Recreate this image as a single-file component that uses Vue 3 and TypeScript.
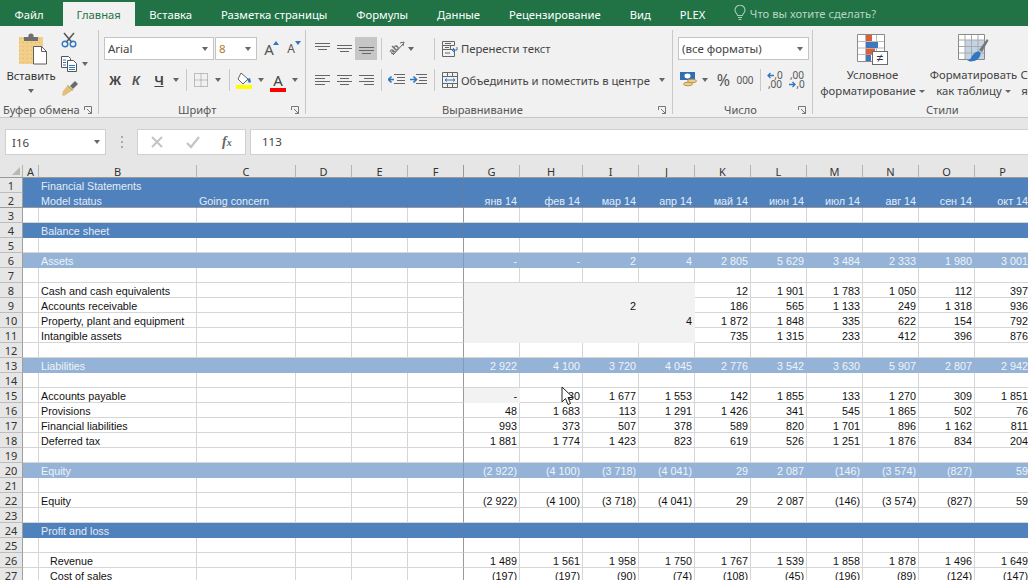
<script setup lang="ts">
interface SheetRow {
  n: number;
  kind?: "dark" | "light";
  label?: string;
  indent?: boolean;
  note?: string;
  vals?: string[];
  shade?: number[];
}

const tabs = ["Файл", "Главная", "Вставка", "Разметка страницы", "Формулы", "Данные", "Рецензирование", "Вид", "PLEX"];
const letters = ["A", "B", "C", "D", "E", "F", "G", "H", "I", "J", "K", "L", "M", "N", "O", "P"];
const equity = ["(2 922)", "(4 100)", "(3 718)", "(4 041)", "29", "2 087", "(146)", "(3 574)", "(827)", "59"];

const filled: SheetRow[] = [
  { n: 1, kind: "dark", label: "Financial Statements" },
  { n: 2, kind: "dark", label: "Model status", note: "Going concern", vals: ["янв 14", "фев 14", "мар 14", "апр 14", "май 14", "июн 14", "июл 14", "авг 14", "сен 14", "окт 14"] },
  { n: 4, kind: "dark", label: "Balance sheet" },
  { n: 6, kind: "light", label: "Assets", vals: ["-", "-", "2", "4", "2 805", "5 629", "3 484", "2 333", "1 980", "3 001"] },
  { n: 8, label: "Cash and cash equivalents", vals: ["", "", "", "", "12", "1 901", "1 783", "1 050", "112", "397"], shade: [0, 1, 2, 3] },
  { n: 9, label: "Accounts receivable", vals: ["", "", "2", "", "186", "565", "1 133", "249", "1 318", "936"], shade: [0, 1, 2, 3] },
  { n: 10, label: "Property, plant and equipment", vals: ["", "", "", "4", "1 872", "1 848", "335", "622", "154", "792"], shade: [0, 1, 2, 3] },
  { n: 11, label: "Intangible assets", vals: ["", "", "", "", "735", "1 315", "233", "412", "396", "876"], shade: [0, 1, 2, 3] },
  { n: 13, kind: "light", label: "Liabilities", vals: ["2 922", "4 100", "3 720", "4 045", "2 776", "3 542", "3 630", "5 907", "2 807", "2 942"] },
  { n: 15, label: "Accounts payable", vals: ["-", "730", "1 677", "1 553", "142", "1 855", "133", "1 270", "309", "1 851"], shade: [0] },
  { n: 16, label: "Provisions", vals: ["48", "1 683", "113", "1 291", "1 426", "341", "545", "1 865", "502", "76"] },
  { n: 17, label: "Financial liabilities", vals: ["993", "373", "507", "378", "589", "820", "1 701", "896", "1 162", "811"] },
  { n: 18, label: "Deferred tax", vals: ["1 881", "1 774", "1 423", "823", "619", "526", "1 251", "1 876", "834", "204"] },
  { n: 20, kind: "light", label: "Equity", vals: equity },
  { n: 22, label: "Equity", vals: equity },
  { n: 24, kind: "dark", label: "Profit and loss" },
  { n: 26, label: "Revenue", indent: true, vals: ["1 489", "1 561", "1 958", "1 750", "1 767", "1 539", "1 858", "1 878", "1 496", "1 649"] },
  { n: 27, label: "Cost of sales", indent: true, vals: ["(197)", "(197)", "(90)", "(74)", "(108)", "(45)", "(196)", "(89)", "(124)", "(147)"] },
];

// empty rows are just the row number
const rows: SheetRow[] = Array.from({ length: 27 }, (_, i) => {
  return filled.find((r) => r.n === i + 1) ?? { n: i + 1 };
});
const valueCols = [0, 1, 2, 3, 4, 5, 6, 7, 8, 9];
</script>

<template>
  <div class="app">
    <nav class="tabs">
      <span v-for="t in tabs" :key="t" class="tab" :class="{ active: t === 'Главная' }">{{ t }}</span>
      <svg class="bulb" width="12" height="16" viewBox="0 0 12 16" fill="none" stroke="#a9cdb9" stroke-width="1.1">
        <path d="M3.6 10.5C3.4 8.8 1 7.8 1 5.2a5 5 0 0 1 10 0c0 2.6-2.4 3.6-2.6 5.3z" />
        <path d="M4 12.5h4M4.6 14.5h2.8" />
      </svg>
      <span class="tell">Что вы хотите сделать?</span>
    </nav>

    <section class="ribbon">
      <div class="group g-clip">
        <div class="body clip-body">
          <div class="paste">
            <svg width="30" height="32" viewBox="0 0 30 32">
              <defs>
                <pattern id="dots" width="4" height="4" patternUnits="userSpaceOnUse">
                  <rect width="4" height="4" fill="#f1cf88" />
                  <rect x="1" y="1" width="1" height="1" fill="#dfb566" />
                </pattern>
              </defs>
              <rect x="1" y="4" width="24" height="27" fill="url(#dots)" />
              <path d="M6 4h14v4H6z" fill="#6f6f6f" />
              <circle cx="13" cy="3" r="2.6" fill="#6f6f6f" />
              <path d="M15.5 13.5h8l5 5v12.5h-13z" fill="#fff" stroke="#5e5e5e" />
              <path d="M23.5 13.5v5h5" fill="none" stroke="#5e5e5e" />
            </svg>
            <span class="paste-label">Вставить</span>
            <i class="tri paste-tri"></i>
          </div>
          <div class="clip-tools">
            <svg width="16" height="16" viewBox="0 0 16 16" fill="none">
              <path d="M3 1l8 9.5M13 1l-8 9.5" stroke="#555" stroke-width="1.5" />
              <circle cx="4" cy="12" r="2.8" stroke="#2f78c0" stroke-width="1.4" />
              <circle cx="12" cy="12" r="2.8" stroke="#2f78c0" stroke-width="1.4" />
            </svg>
            <div class="copy-row">
              <svg width="16" height="16" viewBox="0 0 16 16" fill="#fff" stroke="#555">
                <path d="M.5.5h7l2 2v9h-9z" />
                <path d="M6.5 4.5h6l3 3v8h-9z" />
                <path d="M2 4h3M2 6.5h3M2 9h3M8 9.5h6M8 11.5h6M8 13.5h6" stroke="#2f78c0" fill="none" />
              </svg>
              <i class="tri copy-tri"></i>
            </div>
            <svg width="18" height="17" viewBox="0 0 18 17">
              <path d="M9 6l5-5 3 3-5 5z" fill="#6a6a6a" />
              <path d="M7 5l5 5-3 2-6 4-2-1 1-4z" fill="#e3bf7c" />
              <path d="M6.5 5.5l5.5 5" stroke="#b8935a" />
            </svg>
          </div>
        </div>
        <div class="label">
          <span class="label-text lt-clip">Буфер обмена</span>
          <svg class="launch" width="8" height="8" viewBox="0 0 8 8" fill="none" stroke="#777"><path d="M.5 4V.5H7.5V7.5H4M3 3l4 4M4.5 7.5h3v-3" /></svg>
        </div>
      </div>

      <div class="group g-font">
        <div class="body">
          <div class="row1">
            <div class="combo font-box"><span>Arial</span><i class="tri"></i></div>
            <div class="combo size-box"><span class="size-val">8</span><i class="tri"></i></div>
            <span class="slot w22 grow-a">A<i class="mini up"></i></span>
            <span class="slot w22 grow-a small-a">A<i class="mini down"></i></span>
          </div>
          <div class="row2">
            <span class="slot w22 fmt">Ж</span>
            <span class="slot w20 fmt it">К</span>
            <span class="slot w26 fmt un">Ч</span>
            <span class="slot w8"><i class="tri"></i></span>
            <span class="slot w12"><i class="divider"></i></span>
            <span class="slot w18">
              <svg width="14" height="14" viewBox="0 0 14 14" fill="none" stroke="#8a8a8a" stroke-dasharray="1 1"><path d="M.5.5h13v13H.5zM7 .5v13M.5 7h13" /></svg>
            </span>
            <span class="slot w16"><i class="tri"></i></span>
            <span class="slot w6"><i class="divider"></i></span>
            <span class="slot w24">
              <svg width="16" height="17" viewBox="0 0 16 17">
                <path d="M5 1l7 6-5 5-5-5z" fill="#fff" stroke="#666" />
                <path d="M11 7l3-1 1 4-2 1z" fill="#2f78c0" />
                <rect x="0" y="13" width="16" height="4" fill="#ffff00" />
              </svg>
            </span>
            <span class="slot w10"><i class="tri"></i></span>
            <span class="slot w24 color-a">A</span>
            <span class="slot w10"><i class="tri"></i></span>
          </div>
        </div>
        <div class="label">
          <span class="label-text lt-font">Шрифт</span>
          <svg class="launch" width="8" height="8" viewBox="0 0 8 8" fill="none" stroke="#777"><path d="M.5 4V.5H7.5V7.5H4M3 3l4 4M4.5 7.5h3v-3" /></svg>
        </div>
      </div>

      <div class="group g-align">
        <div class="body">
          <div class="row1">
            <span class="slot w22 top"><svg width="15" height="7" viewBox="0 0 15 7" stroke="#666"><path d="M0 .5h15M0 3.5h15M3 6.5h9" /></svg></span>
            <span class="slot w22"><svg width="15" height="7" viewBox="0 0 15 7" stroke="#666"><path d="M0 .5h15M0 3.5h15M3 6.5h9" /></svg></span>
            <span class="slot w22 picked"><svg width="15" height="7" viewBox="0 0 15 7" stroke="#666"><path d="M0 .5h15M0 3.5h15M3 6.5h9" /></svg></span>
            <span class="slot w8"><i class="divider"></i></span>
            <span class="slot w23">
              <svg width="17" height="17" viewBox="0 0 17 17" fill="none" stroke="#666">
                <text x="1" y="13" class="ab" transform="rotate(-45 5 10)">ab</text>
                <path d="M5 15L15 4M16 2l-4 1M16 2l-1 4" />
              </svg>
            </span>
            <span class="slot w6"><i class="tri"></i></span>
            <span class="slot w16"></span>
            <span class="slot w8"><i class="divider"></i></span>
            <div class="wide">
              <svg width="16" height="16" viewBox="0 0 16 16" fill="none" stroke="#666">
                <path d="M.5.5h12v4H.5zM.5 4.500h8v4H.5zM.5 8.500h12v7H.5zM3 2.500h6M3 6.500h4M3 12h5" />
                <path d="M15 6v3h-5M12 7l-2 2 2 2" stroke="#2f78c0" />
              </svg>
              <span>Перенести текст</span>
            </div>
          </div>
          <div class="row2">
            <span class="slot w22"><svg width="15" height="10" viewBox="0 0 15 10" stroke="#666"><path d="M0 .5h15M0 3.5h10M0 6.5h15M0 9.5h10" /></svg></span>
            <span class="slot w22"><svg width="15" height="10" viewBox="0 0 15 10" stroke="#666"><path d="M0 .5h15M3 3.5h9M0 6.5h15M3 9.5h9" /></svg></span>
            <span class="slot w22"><svg width="15" height="10" viewBox="0 0 15 10" stroke="#666"><path d="M0 .5h15M5 3.5h10M0 6.5h15M5 9.5h10" /></svg></span>
            <span class="slot w8"><i class="divider"></i></span>
            <span class="slot w22">
              <svg width="17" height="12" viewBox="0 0 17 12" stroke="#666"><path d="M6 .5h11M9 3.5h8M9 6.5h8M6 9.5h11" /><path d="M0 5.5h6M3.5 2.500l-3 3 3 3" stroke="#2f78c0" stroke-width="1.6" fill="none" /></svg>
            </span>
            <span class="slot w23">
              <svg width="17" height="12" viewBox="0 0 17 12" stroke="#666"><path d="M6 .5h11M9 3.5h8M9 6.5h8M6 9.5h11" /><path d="M0 5.5h6M3.5 2.500l3 3-3 3" stroke="#2f78c0" stroke-width="1.6" fill="none" /></svg>
            </span>
            <span class="slot w8"><i class="divider"></i></span>
            <div class="wide">
              <svg width="16" height="16" viewBox="0 0 16 16" fill="none" stroke="#666">
                <path d="M.5.5h15v15H.5zM.5 4.500h15M.5 11.500h15M5.500.5v4M10.500.5v4M5.500 11.500v4M10.500 11.500v4" />
                <path d="M3 8h10M5 6.500L3 8l2 1.500M11 6.500L13 8l-2 1.500" stroke="#2f78c0" />
              </svg>
              <span>Объединить и поместить в центре</span>
              <i class="tri merge-tri"></i>
            </div>
          </div>
        </div>
        <div class="label">
          <span class="label-text lt-align">Выравнивание</span>
          <svg class="launch" width="8" height="8" viewBox="0 0 8 8" fill="none" stroke="#777"><path d="M.5 4V.5H7.5V7.5H4M3 3l4 4M4.5 7.5h3v-3" /></svg>
        </div>
      </div>

      <div class="group g-num">
        <div class="body">
          <div class="row1">
            <div class="combo num-box"><span>(все форматы)</span><i class="tri"></i></div>
          </div>
          <div class="row2">
            <span class="slot w22">
              <svg width="18" height="16" viewBox="0 0 18 16">
                <rect x="0" y="0" width="15" height="8" fill="#2f6db5" />
                <ellipse cx="7.5" cy="4" rx="3" ry="2.4" fill="#fff" />
                <ellipse cx="12" cy="9" rx="4.5" ry="1.8" fill="#f0cd85" stroke="#b8935a" />
                <ellipse cx="8" cy="12" rx="4.5" ry="1.8" fill="#f0cd85" stroke="#b8935a" />
              </svg>
            </span>
            <span class="slot w10"><i class="tri"></i></span>
            <span class="slot w27 pct">%</span>
            <span class="slot w16 thou">000</span>
            <span class="slot w14"><i class="divider"></i></span>
            <span class="slot w16 dec">
              <span class="dec-line">
                <svg width="7" height="7" viewBox="0 0 7 7" fill="none" stroke="#2f78c0" stroke-width="1.3"><path d="M7 3.5H1M3.5 1L1 3.5 3.5 6" /></svg>,0
              </span>
              <span class="dec-line">,00</span>
            </span>
            <span class="slot w6"></span>
            <span class="slot w16 dec">
              <span class="dec-line">,00</span>
              <span class="dec-line">
                <svg width="7" height="7" viewBox="0 0 7 7" fill="none" stroke="#2f78c0" stroke-width="1.3"><path d="M0 3.5h6M3.5 1L6 3.5 3.5 6" /></svg>,0
              </span>
            </span>
          </div>
        </div>
        <div class="label">
          <span class="label-text lt-num">Число</span>
          <svg class="launch" width="8" height="8" viewBox="0 0 8 8" fill="none" stroke="#777"><path d="M.5 4V.5H7.5V7.5H4M3 3l4 4M4.5 7.5h3v-3" /></svg>
        </div>
      </div>

      <div class="group g-styles">
        <div class="body big-row">
          <div class="big b-cond">
            <svg class="big-ic" width="31" height="31" viewBox="0 0 31 31">
              <path d="M.5.5h27v27H.5z" fill="#fff" stroke="#8a8a8a" />
              <path d="M8.5 1v26M19.5 1v26M1 7.5h26M1 14h26M1 20.5h26" stroke="#bcbcbc" />
              <rect x="9" y="1" width="6" height="6" fill="#d9603a" />
              <rect x="9" y="8" width="12" height="6" fill="#3f78bd" />
              <rect x="9" y="14.500" width="9" height="6" fill="#d9603a" />
              <rect x="9" y="21" width="5" height="6" fill="#3f78bd" />
              <rect x="15.500" y="17.500" width="15" height="13" fill="#fff" stroke="#6a6a6a" />
              <text x="23" y="28" class="ne">≠</text>
            </svg>
            <span class="big-text">Условное</span>
            <span class="big-text">форматирование<i class="tri big-tri"></i></span>
          </div>
          <div class="big b-table">
            <svg class="big-ic" width="31" height="31" viewBox="0 0 31 31">
              <path d="M.5.5h26v25H.5z" fill="#fff" stroke="#8a8a8a" />
              <rect x="7" y="6" width="19" height="19" fill="#c3d3e6" />
              <path d="M7 1v24M13.500 1v24M20 1v24M1 6h25M1 12.500h25M1 19h25" stroke="#a9a9a9" />
              <path d="M21 16L29 5l1.500 1.500L24 18z" fill="#777" />
              <path d="M14 22c2-3 6-6 8-4s-1 8-6 9-5 0-7 0c2-1 4-2 5-5z" fill="#2f78c0" />
            </svg>
            <span class="big-text">Форматировать</span>
            <span class="big-text">как таблицу<i class="tri big-tri"></i></span>
          </div>
          <div class="big b-cell">
            <span class="big-ic blank"></span>
            <span class="big-text">Стили</span>
            <span class="big-text">ячеек</span>
          </div>
        </div>
        <div class="label">
          <span class="label-text lt-styles">Стили</span>
        </div>
      </div>
    </section>

    <section class="formula">
      <div class="name-box"><span>I16</span><i class="tri"></i></div>
      <span class="grip"></span>
      <div class="fx-box">
        <svg width="14" height="14" viewBox="0 0 14 14" fill="none" stroke="#c4c4c4" stroke-width="2"><path d="M2 2l10 10M12 2L2 12" /></svg>
        <svg width="16" height="14" viewBox="0 0 16 14" fill="none" stroke="#c4c4c4" stroke-width="2.2"><path d="M2 8l4 4 8-10" /></svg>
        <span class="fx">f<small>x</small></span>
      </div>
      <div class="input">113</div>
    </section>

    <section class="sheet">
      <div class="corner"><i></i></div>
      <div v-for="l in letters" :key="l" class="col-head" :class="{ frozen: l === 'F' }">{{ l }}</div>

      <div v-for="r in rows" :key="r.n" class="row" :class="[r.kind, { 'row-end': r.n === 2 }]">
        <div class="row-head">{{ r.n }}</div>
        <div class="cell"></div>
        <div class="cell text" :class="{ indent: r.indent }">{{ r.label }}</div>
        <div class="cell text">{{ r.note }}</div>
        <div class="cell"></div>
        <div class="cell"></div>
        <div class="cell frozen"></div>
        <div
          v-for="c in valueCols"
          :key="c"
          class="cell num"
          :class="{ shaded: r.shade?.includes(c) }"
        >{{ r.vals?.[c] }}</div>
      </div>

      <svg class="cursor" width="15" height="20" viewBox="0 0 15 20">
        <path d="M1 1v15l3.500-3.500 2.500 6 2.500-1-2.500-6h5z" fill="#fff" stroke="#222" />
      </svg>
    </section>
  </div>
</template>

<style scoped>
.app {
  width: 1028px;
  height: 580px;
  overflow: hidden;
  display: flex;
  flex-direction: column;
  font-family: "Noto Sans", "Open Sans", sans-serif;
  background: #fff;
}

/* tabs */
.tabs {
  height: 26px;
  flex: none;
  background: #217346;
  display: flex;
  align-items: flex-end;
  color: #fff;
  font-size: 11.25px;
}
.tab {
  height: 24px;
  line-height: 25px;
  padding: 0 14.5px;
  white-space: nowrap;
}
.tab:first-child { padding-right: 19px; }
.tab.active {
  background: #f1f1f1;
  color: #217346;
  padding: 0 14px;
}
.bulb {
  margin: 0 0 5px 14px;
}
.tell {
  margin-left: 4px;
  line-height: 25px;
  color: #b7d5c5;
}

/* ribbon */
.ribbon {
  height: 92px;
  flex: none;
  box-sizing: border-box;
  background: #f1f1f1;
  border-bottom: 1px solid #c6c6c6;
  display: flex;
  padding-top: 4px;
  overflow: hidden;
  color: #444;
  font-size: 11.1px;
}
.group {
  height: 84px;
  flex: none;
  box-sizing: border-box;
  border-right: 1px solid #c8c8c8;
  margin-right: 1px;
  display: flex;
  flex-direction: column;
}
.g-clip { width: 99px; }
.g-font { width: 206px; padding-left: 4px; }
.g-align { width: 366px; padding-left: 4px; }
.g-num { width: 139px; padding-left: 4px; }
.g-styles { width: 220px; border-right: none; }
.body {
  height: 76px;
  flex: none;
}
.label {
  height: 8px;
  line-height: 12px;
  display: flex;
  align-items: center;
  color: #555;
}
.label-text { white-space: nowrap; }
.lt-clip { margin-left: 3px; }
.lt-font { margin-left: 74px; }
.lt-align { margin-left: 131px; }
.lt-num { margin-left: 46px; }
.lt-styles { margin-left: 112px; }
.launch { margin-left: auto; margin-right: 6px; }
.row1 {
  display: flex;
  height: 23px;
  margin-top: 7px;
}
.row2 {
  display: flex;
  height: 22px;
  margin-top: 9px;
}
.slot {
  display: flex;
  align-items: center;
  justify-content: center;
  flex: none;
}
.w6 { width: 6px; }
.w8 { width: 8px; }
.w10 { width: 10px; }
.w12 { width: 12px; }
.w14 { width: 14px; }
.w16 { width: 16px; }
.w18 { width: 18px; }
.w20 { width: 20px; }
.w22 { width: 22px; }
.w23 { width: 23px; }
.w24 { width: 24px; }
.w26 { width: 26px; }
.w27 { width: 27px; }
.tri {
  display: inline-block;
  width: 0;
  height: 0;
  border-left: 3.5px solid transparent;
  border-right: 3.5px solid transparent;
  border-top: 4px solid #666;
}
.divider {
  display: block;
  width: 1px;
  height: 22px;
  background: #c8c8c8;
}

/* clipboard */
.clip-body { display: flex; }
.paste {
  width: 59px;
  display: flex;
  flex-direction: column;
  align-items: center;
  padding-top: 3px;
  box-sizing: border-box;
}
.paste svg { margin-left: 7px; }
.paste-label {
  line-height: 16px;
  margin-top: 3px;
  margin-left: 3px;
  color: #333;
  font-size: 11.3px;
}
.paste-tri { margin-top: 5px; margin-left: 3px; }
.clip-tools {
  display: flex;
  flex-direction: column;
  padding: 2px 0 0 2px;
  gap: 8px;
}
.copy-row {
  display: flex;
  align-items: center;
}
.copy-tri { margin-left: 5px; }

/* font */
.combo {
  box-sizing: border-box;
  height: 23px;
  background: #fff;
  border: 1px solid #c4c4c4;
  display: flex;
  align-items: center;
  justify-content: space-between;
  padding: 0 5px 0 3px;
  font-size: 11.5px;
  color: #444;
  flex: none;
}
.font-box { width: 110px; }
.size-box { width: 42px; margin-left: 1px; margin-right: 1px; }
.size-val { color: #b3772a; }
.grow-a {
  position: relative;
  font-size: 15px;
  color: #555;
}
.small-a { font-size: 12px; }
.mini {
  position: absolute;
  right: 1px;
  top: 4px;
  width: 0;
  height: 0;
  border-left: 3px solid transparent;
  border-right: 3px solid transparent;
}
.mini.up { border-bottom: 4px solid #2f78c0; }
.mini.down { border-top: 4px solid #2f78c0; }
.fmt {
  font-family: "Liberation Sans", sans-serif;
  font-weight: 700;
  font-size: 13px;
  color: #444;
}
.fmt.it { font-style: italic; color: #555; }
.fmt.un { text-decoration: underline; }
.color-a {
  font-size: 15px;
  color: #444;
  position: relative;
}
.color-a::after {
  content: "";
  position: absolute;
  left: 4px;
  right: 4px;
  bottom: -1px;
  height: 4px;
  background: #f00;
}

/* alignment */
.top { align-items: flex-start; padding-top: 6px; box-sizing: border-box; height: 23px; }
.picked {
  background: #c6c6c6;
  height: 23px;
  align-items: flex-end;
  padding-bottom: 6px;
  box-sizing: border-box;
}
.ab {
  font-family: "Liberation Sans", sans-serif;
  font-size: 9px;
  font-weight: 700;
  fill: #666;
  stroke: none;
}
.wide {
  display: flex;
  align-items: center;
  margin-left: 4px;
  gap: 3px;
  font-size: 11.3px;
  white-space: nowrap;
}
.merge-tri { margin-left: 6px; }

/* number */
.num-box { width: 131px; }
.pct { font-size: 16px; color: #555; }
.thou { font-size: 10px; color: #555; }
.dec {
  flex-direction: column;
  font-size: 10px;
  line-height: 9px;
  color: #555;
}
.dec-line {
  display: flex;
  align-items: center;
  white-space: nowrap;
}

/* styles */
.big-row { display: flex; }
.big {
  display: flex;
  flex-direction: column;
  align-items: center;
  flex: none;
  font-size: 11.3px;
  white-space: nowrap;
  color: #444;
}
.b-cond { width: 114px; padding-left: 3px; box-sizing: border-box; }
.b-table { width: 91px; }
.b-cell { width: 36px; }
.big-ic {
  margin-top: 4px;
  height: 31px;
  margin-bottom: 2px;
  flex: none;
}
.blank { display: block; }
.big-text { line-height: 16px; }
.big-tri { margin-left: 3px; vertical-align: middle; border-left-width: 3px; border-right-width: 3px; border-top-width: 3px; }
.ne {
  font-family: "Liberation Sans", sans-serif;
  font-size: 12px;
  text-anchor: middle;
  fill: #333;
}

/* formula bar */
.formula {
  height: 47px;
  flex: none;
  box-sizing: border-box;
  background: #e6e6e6;
  display: flex;
  align-items: flex-start;
  padding: 11px 0 0 5px;
  font-size: 11.5px;
  color: #444;
}
.name-box {
  box-sizing: border-box;
  width: 101px;
  height: 26px;
  background: #fff;
  border: 1px solid #d0d0d0;
  display: flex;
  align-items: center;
  justify-content: space-between;
  padding: 0 5px 0 6px;
  flex: none;
}
.grip {
  width: 2px;
  height: 12px;
  margin: 7px 14px 0 15px;
  background: repeating-linear-gradient(#aaa 0 2px, transparent 2px 5px);
  flex: none;
}
.fx-box {
  box-sizing: border-box;
  width: 109px;
  height: 26px;
  background: #fff;
  border: 1px solid #d0d0d0;
  display: flex;
  align-items: center;
  gap: 21px;
  padding-left: 12px;
  flex: none;
}
.fx {
  font-family: "Liberation Serif", serif;
  font-style: italic;
  font-weight: 700;
  font-size: 14px;
  color: #666;
}
.fx small { font-size: 10px; }
.input {
  box-sizing: border-box;
  height: 26px;
  line-height: 24px;
  flex: 1;
  margin-left: 4px;
  margin-right: -4px;
  background: #fff;
  border: 1px solid #d0d0d0;
  padding-left: 11px;
}

/* sheet */
.sheet {
  position: relative;
  flex: 1;
  min-height: 0;
  overflow: hidden;
  display: grid;
  grid-template-columns: 23px 16px 158px 99px 56px 56px 56px 56px 63px 56px 56px 56px 56px 56px 56px 56px 56px;
  grid-template-rows: 13px;
  grid-auto-rows: 15px;
  font-family: "Liberation Sans", Arial, sans-serif;
  font-size: 10.75px;
  color: #111;
}
.corner {
  background: #e6e6e6;
  border-right: 1px solid #b4b4b4;
  border-bottom: 1px solid #9a9a9a;
  box-sizing: border-box;
  display: flex;
  align-items: flex-end;
  justify-content: flex-end;
  padding: 0 2px 2px 0;
}
.corner i {
  width: 0;
  height: 0;
  border-left: 8px solid transparent;
  border-bottom: 8px solid #b8b8b8;
}
.col-head {
  background: #e6e6e6;
  border-right: 1px solid #b4b4b4;
  border-bottom: 1px solid #9a9a9a;
  box-sizing: border-box;
  text-align: center;
  line-height: 13px;
  font-family: "Noto Sans", sans-serif;
  font-size: 11px;
  color: #333;
  overflow: hidden;
}
.row {
  display: contents;
}
.row-head {
  background: #e6e6e6;
  border-right: 1px solid #9f9f9f;
  border-bottom: 1px solid #bdbdbd;
  box-sizing: border-box;
  text-align: center;
  line-height: 16px;
  font-family: "Noto Sans", sans-serif;
  font-size: 11px;
  color: #333;
}
.cell {
  box-sizing: border-box;
  border-right: 1px solid #d6d6d6;
  border-bottom: 1px solid #d6d6d6;
  line-height: 17px;
  white-space: nowrap;
  min-width: 0;
}
.cell.text {
  padding-left: 2px;
}
.cell.indent { padding-left: 11px; }
.cell.num {
  text-align: right;
  padding-right: 2px;
}
.cell.shaded { background: #f2f2f2; border-color: #f2f2f2; }
.cell.frozen { border-right: 1.5px solid #9a9a9a; }
.col-head.frozen { border-right-color: #9a9a9a; }
.row-end .cell { border-bottom: 1.5px solid #9a9a9a; }
.row-end .row-head { border-bottom-color: #9a9a9a; }
.dark .cell {
  background: #4f81bd;
  border-color: #4f81bd;
  color: #e4ecf5;
}
.light .cell {
  background: #95b3d7;
  border-color: #95b3d7;
  color: #eef3f9;
}
.dark .cell.frozen { border-right-color: #5f7fa6; }
.light .cell.frozen { border-right-color: #7f9cbd; }
.row-end .cell { border-bottom-color: #9a9a9a; }
.cursor {
  position: absolute;
  left: 561px;
  top: 221px;
}
</style>

<style>
html, body { margin: 0; overflow: hidden; }
</style>
